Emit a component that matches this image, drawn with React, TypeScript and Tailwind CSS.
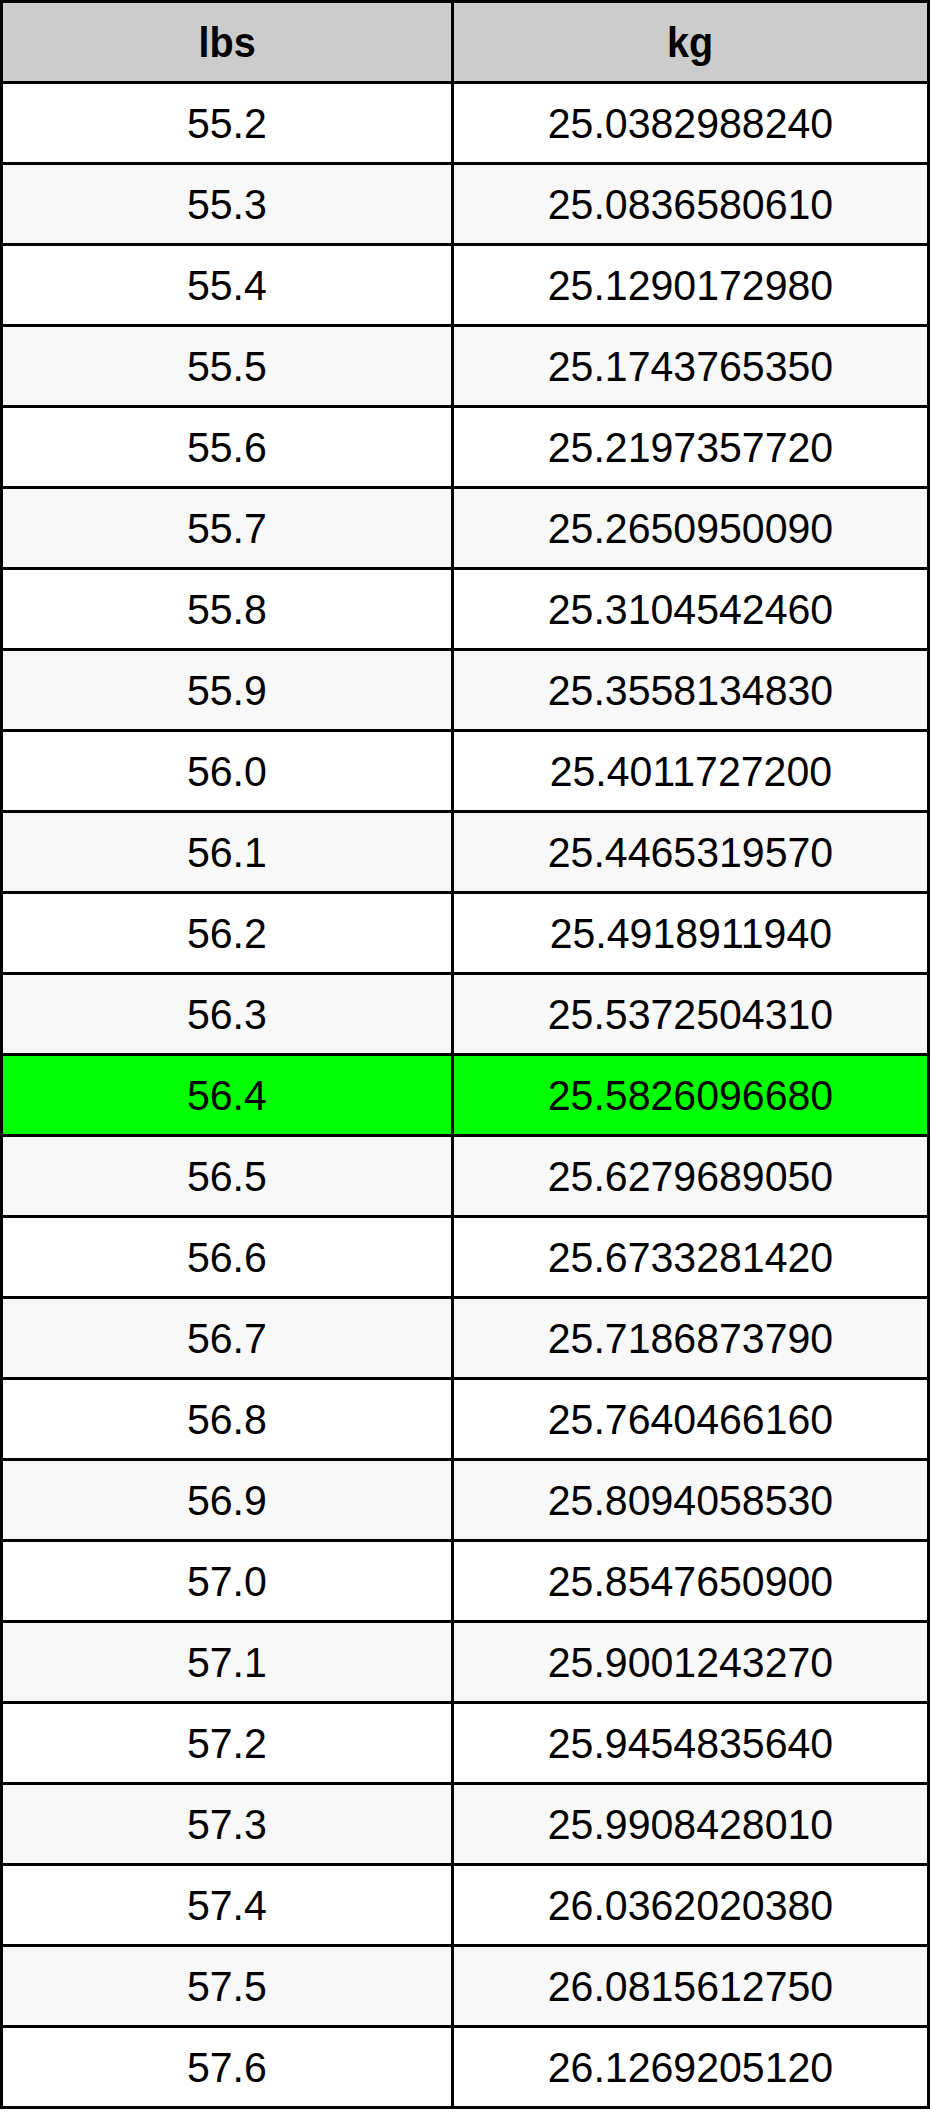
import React from "react";

const rows: [string, string][] = [
  ["55.2", "25.0382988240"],
  ["55.3", "25.0836580610"],
  ["55.4", "25.1290172980"],
  ["55.5", "25.1743765350"],
  ["55.6", "25.2197357720"],
  ["55.7", "25.2650950090"],
  ["55.8", "25.3104542460"],
  ["55.9", "25.3558134830"],
  ["56.0", "25.4011727200"],
  ["56.1", "25.4465319570"],
  ["56.2", "25.4918911940"],
  ["56.3", "25.5372504310"],
  ["56.4", "25.5826096680"],
  ["56.5", "25.6279689050"],
  ["56.6", "25.6733281420"],
  ["56.7", "25.7186873790"],
  ["56.8", "25.7640466160"],
  ["56.9", "25.8094058530"],
  ["57.0", "25.8547650900"],
  ["57.1", "25.9001243270"],
  ["57.2", "25.9454835640"],
  ["57.3", "25.9908428010"],
  ["57.4", "26.0362020380"],
  ["57.5", "26.0815612750"],
  ["57.6", "26.1269205120"],
];

export default function App() {
  return (
    <div
      className="w-[930px] bg-white text-black"
      style={{ fontFamily: '"Liberation Sans", Arial, sans-serif' }}
    >
      <div className="grid grid-cols-[451px_476px] border-l-[3px] border-t-[3px] border-black">
        <div className="h-[81px] flex items-center justify-center border-r-[3px] border-b-[3px] border-black bg-[#cccccc] text-[43px] font-bold leading-none">
          <span className="inline-block scale-x-[0.92]">lbs</span>
        </div>
        <div className="h-[81px] flex items-center justify-center border-r-[3px] border-b-[3px] border-black bg-[#cccccc] text-[43px] font-bold leading-none">
          <span className="inline-block scale-x-[0.92]">kg</span>
        </div>
        {rows.map(([a, b], i) => {
          const hl = a === "56.4";
          const bg = hl ? "bg-[#00ff00]" : i % 2 === 1 ? "bg-[#f8f8f8]" : "bg-white";
          return (
            <React.Fragment key={a}>
              <div
                className={`h-[81px] flex items-center justify-center border-r-[3px] border-b-[3px] border-black text-[43px] leading-none ${bg}`}
              >
                <span className="inline-block scale-x-[0.955]">{a}</span>
              </div>
              <div
                className={`h-[81px] flex items-center justify-center border-r-[3px] border-b-[3px] border-black text-[43px] leading-none ${bg}`}
              >
                <span className="inline-block scale-x-[0.955]">{b}</span>
              </div>
            </React.Fragment>
          );
        })}
      </div>
    </div>
  );
}
